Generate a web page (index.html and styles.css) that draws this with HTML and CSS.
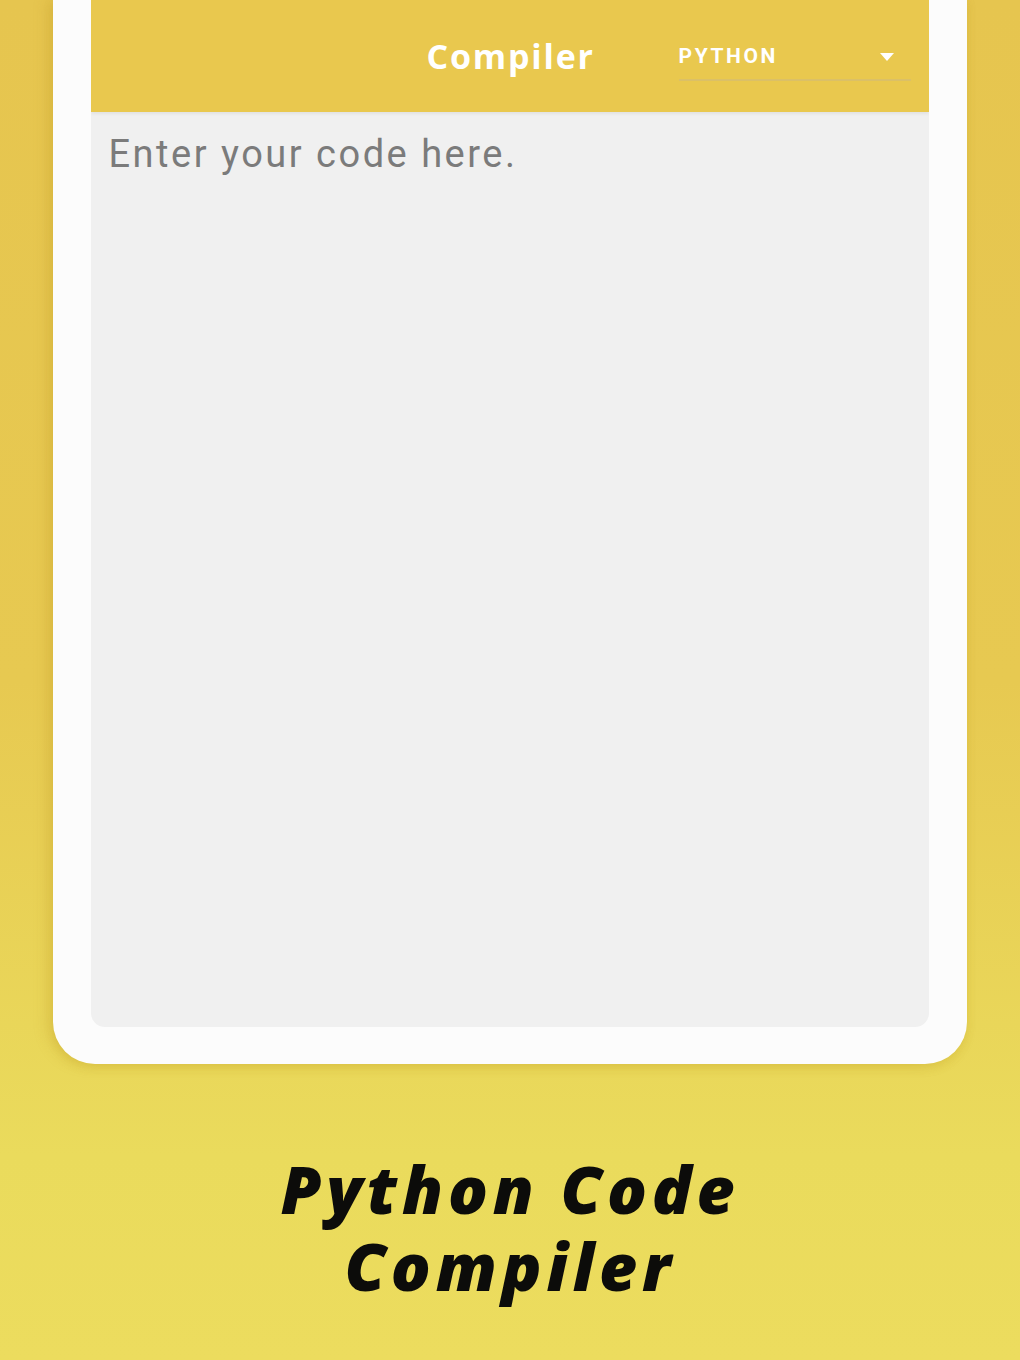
FILE: index.html
```html
<!DOCTYPE html>
<html lang="en">
<head>
<meta charset="utf-8">
<title>Python Code Compiler</title>
<link rel="stylesheet" href="styles.css">
</head>
<body>
<main class="page">
  <section class="phone">
    <div class="screen">
      <header class="appbar">
        <h1 class="appbar-title">Compiler</h1>
        <div class="lang-select">
          <span class="lang-label">PYTHON</span>
          <svg class="caret" width="16" height="10" viewBox="0 0 16 10"><path d="M1 1 L15 1 L8 9 Z" fill="#ffffff"/></svg>
        </div>
      </header>
      <div class="editor">
        <p class="placeholder">Enter your code here.</p>
      </div>
    </div>
  </section>
  <h2 class="headline">Python Code<br>Compiler</h2>
</main>
</body>
</html>
```

FILE: styles.css
```css
* { box-sizing: border-box; }
html, body {
  margin: 0;
  padding: 0;
}
body {
  width: 1020px;
  height: 1360px;
  overflow: hidden;
  background: linear-gradient(180deg, #e6c54f 0%, #e7c951 50%, #eadb5c 85%, #ecdc5e 100%);
}
.page {
  display: flex;
  flex-direction: column;
  align-items: center;
  height: 1360px;
}
.phone {
  margin-left: -1px;
  width: 914px;
  height: 1064px;
  background: #fcfcfc;
  border-radius: 0 0 42px 42px;
  padding: 0 38px 37px 38px;
  box-shadow: -6px 0 14px rgba(190, 150, 40, 0.25), 0 4px 8px rgba(200, 170, 40, 0.25);
  display: flex;
}
.screen {
  flex: 1;
  display: flex;
  flex-direction: column;
  background: #f0f0f0;
  border-radius: 0 0 14px 14px;
  overflow: hidden;
}
.appbar {
  height: 112px;
  background: #e9c84e;
  display: flex;
  align-items: center;
  padding-left: 336px;
  box-shadow: 0 2px 3px rgba(0,0,0,0.06);
  position: relative;
}
.appbar-title {
  margin: 0;
  font-family: "Open Sans", "Liberation Sans", sans-serif;
  font-weight: 700;
  font-size: 34px;
  color: #ffffff;
  letter-spacing: 1.8px;
  width: 252px;
}
.lang-select {
  width: 232px;
  height: 48px;
  display: flex;
  align-items: center;
  justify-content: space-between;
  padding: 0 16px 0 0;
  border-bottom: 2px solid rgba(215, 190, 110, 0.8);
  margin-top: 2px;
}
.lang-label {
  font-family: "Roboto", "Liberation Sans", sans-serif;
  font-weight: 700;
  font-size: 21px;
  color: #ffffff;
  letter-spacing: 2.6px;
}
.caret { display: block; margin-top: 2px; }
.editor {
  flex: 1;
  padding: 18px 18px;
}
.placeholder {
  margin: 0;
  font-family: "Roboto", "Liberation Sans", sans-serif;
  font-size: 38px;
  color: #7b7b7b;
  line-height: 48px;
  letter-spacing: 2.5px;
}
.headline {
  margin: 86px 0 0 0;
  font-family: "Open Sans", "Liberation Sans", sans-serif;
  font-weight: 800;
  font-style: italic;
  font-size: 66px;
  line-height: 77px;
  color: #0c0c0a;
  text-align: center;
  letter-spacing: 4.8px;
}
```
